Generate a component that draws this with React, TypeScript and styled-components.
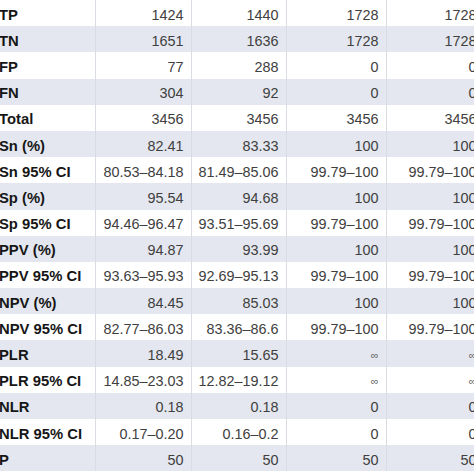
import React from 'react';
import styled, { createGlobalStyle } from 'styled-components';

const GlobalStyle = createGlobalStyle`
  html, body {
    margin: 0;
    padding: 0;
    background: #ffffff;
    overflow: hidden;
  }
  body {
    font-family: 'Liberation Sans', Arial, Helvetica, sans-serif;
  }
`;

const Table = styled.div`
  display: flex;
  flex-direction: column;
  width: 484px;
`;

type RowProps = {
  shaded: boolean;
};

const Row = styled.div<RowProps>`
  display: grid;
  grid-template-columns: 94.7px 96.3px 95px 100px 98px;
  height: 26.2px;
  background: ${(props) => (props.shaded ? '#e4e7ef' : '#ffffff')};
`;

const Label = styled.div`
  display: flex;
  align-items: center;
  padding: 3px 0 0 0;
  text-indent: -1px;
  font-size: 14.8px;
  font-weight: 700;
  color: #161616;
  white-space: nowrap;
  overflow: hidden;
`;

type ValueProps = {
  small?: boolean;
};

const Value = styled.div<ValueProps>`
  display: flex;
  align-items: center;
  justify-content: flex-end;
  padding: 3px 7.5px 0 0;
  border-left: 1px solid #d9dce2;
  font-size: ${(props) => (props.small ? '11px' : '14.4px')};
  color: ${(props) => (props.small ? '#666666' : '#404040')};
  white-space: nowrap;
`;

const rows: [string, string[]][] = [
  ['TP', ['1424', '1440', '1728', '1728']],
  ['TN', ['1651', '1636', '1728', '1728']],
  ['FP', ['77', '288', '0', '0']],
  ['FN', ['304', '92', '0', '0']],
  ['Total', ['3456', '3456', '3456', '3456']],
  ['Sn (%)', ['82.41', '83.33', '100', '100']],
  ['Sn 95% CI', ['80.53–84.18', '81.49–85.06', '99.79–100', '99.79–100']],
  ['Sp (%)', ['95.54', '94.68', '100', '100']],
  ['Sp 95% CI', ['94.46–96.47', '93.51–95.69', '99.79–100', '99.79–100']],
  ['PPV (%)', ['94.87', '93.99', '100', '100']],
  ['PPV 95% CI', ['93.63–95.93', '92.69–95.13', '99.79–100', '99.79–100']],
  ['NPV (%)', ['84.45', '85.03', '100', '100']],
  ['NPV 95% CI', ['82.77–86.03', '83.36–86.6', '99.79–100', '99.79–100']],
  ['PLR', ['18.49', '15.65', '∞', '∞']],
  ['PLR 95% CI', ['14.85–23.03', '12.82–19.12', '∞', '∞']],
  ['NLR', ['0.18', '0.18', '0', '0']],
  ['NLR 95% CI', ['0.17–0.20', '0.16–0.2', '0', '0']],
  ['P', ['50', '50', '50', '50']],
];

const App = () => {
  return (
    <>
      <GlobalStyle />
      <Table>
        {rows.map(([label, values], i) => (
          <Row key={label} shaded={i % 2 === 1}>
            <Label>{label}</Label>
            {values.map((v, j) => (
              <Value key={j} small={v === '∞'}>
                {v}
              </Value>
            ))}
          </Row>
        ))}
      </Table>
    </>
  );
};

export default App;
